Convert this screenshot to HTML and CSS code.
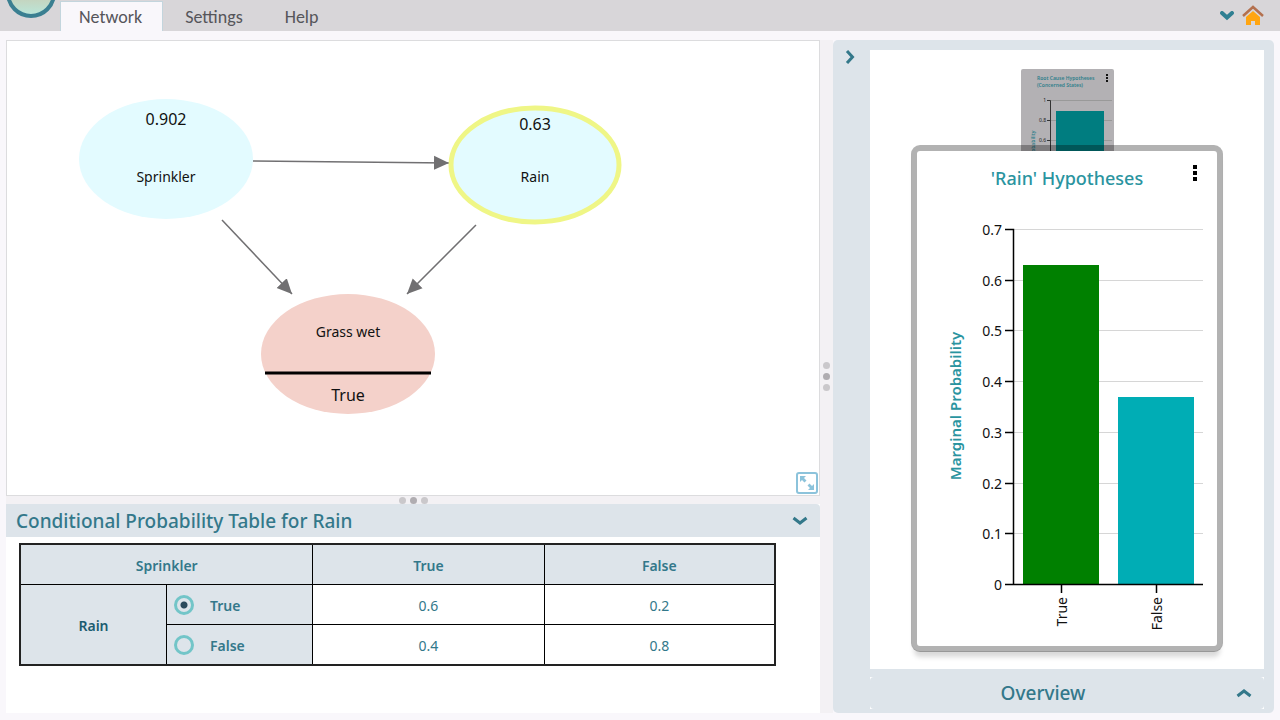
FILE: index.html
```html
<!DOCTYPE html>
<html lang="en">
<head>
    <meta charset="UTF-8">
    <meta name="viewport" content="width=device-width, initial-scale=1.0">
    <title>Network - Rain</title>
    <link rel="stylesheet" href="styles.css">
</head>
<body>
<header class="topbar">
    <svg class="logo" width="60" height="30" viewBox="0 0 60 30">
        <defs>
            <linearGradient id="logo-fill" x1="0" y1="0" x2="0" y2="1">
                <stop offset="0.5" stop-color="#c9cdb4"/>
                <stop offset="1" stop-color="#b9e8dc"/>
            </linearGradient>
        </defs>
        <circle cx="31" cy="-7" r="23" fill="url(#logo-fill)" stroke="#3a7f91" stroke-width="4"/>
    </svg>
    <nav class="tabs">
        <a class="tab active" href="#network">Network</a>
        <a class="tab" href="#settings">Settings</a>
        <a class="tab" href="#help">Help</a>
    </nav>
    <div class="topbar-actions">
        <button type="button" aria-label="More">
            <svg width="14" height="10" viewBox="0 0 14 10"><path d="M2 2 L7 6.5 L12 2" fill="none" stroke="#2f7f92" stroke-width="4" stroke-linecap="round"/></svg>
        </button>
        <button type="button" aria-label="Home">
            <svg width="22" height="22" viewBox="0 0 22 22">
                <path d="M4 12 L11 6 L18 12 V20 H13 V16 H9 V20 H4 Z" fill="#ffa511"/>
                <path d="M1 11 L11 2 L21 11" fill="none" stroke="#b4714f" stroke-width="2.5"/>
            </svg>
        </button>
    </div>
</header>

<main class="workspace">
    <div class="left">
        <section class="canvas" id="network">
            <svg class="graph" width="100%" height="100%">
                <defs>
                    <marker id="arrow" markerUnits="userSpaceOnUse" markerWidth="16" markerHeight="16" refX="15" refY="8" orient="auto">
                        <path d="M0 1 L15 8 L0 15 Z" fill="#717072"/>
                    </marker>
                </defs>
                <g class="edges">
                    <line x1="246" y1="120" x2="442" y2="122" marker-end="url(#arrow)"/>
                    <line x1="215" y1="179" x2="285" y2="253" marker-end="url(#arrow)"/>
                    <line x1="469" y1="184" x2="400" y2="253" marker-end="url(#arrow)"/>
                </g>
                <g class="node">
                    <ellipse cx="159" cy="118" rx="87" ry="60"/>
                    <text class="value" x="159" y="84">0.902</text>
                    <text x="159" y="141">Sprinkler</text>
                </g>
                <g class="node selected">
                    <ellipse cx="528" cy="124" rx="84" ry="57"/>
                    <text class="value" x="528" y="89">0.63</text>
                    <text x="528" y="141">Rain</text>
                </g>
                <g class="node evidence">
                    <ellipse cx="341" cy="313" rx="87" ry="60"/>
                    <line x1="258" y1="332" x2="424" y2="332"/>
                    <text x="341" y="296">Grass wet</text>
                    <text class="value" x="341" y="360">True</text>
                </g>
            </svg>
            <button type="button" class="expand" aria-label="Fit to window">
                <svg width="22" height="22" viewBox="0 0 22 22">
                    <rect x="1" y="1" width="20" height="20" rx="2" fill="#fff" stroke="#8cc3db" stroke-width="2"/>
                    <path d="M4 4 H10 L8 6 L10.5 8.5 L8.5 10.5 L6 8 L4 10 Z M18 18 H12 L14 16 L11.5 13.5 L13.5 11.5 L16 14 L18 12 Z" fill="#8cc3db"/>
                </svg>
            </button>
        </section>
        <div class="splitter horizontal"><i></i><i></i><i></i></div>
        <section class="cpt">
            <div class="cpt-header">
                <h2>Conditional Probability Table for Rain</h2>
                <button type="button" aria-label="Collapse table">
                    <svg width="16" height="10" viewBox="0 0 16 10"><path d="M1.5 2 L8 7 L14.5 2" fill="none" stroke="#33788a" stroke-width="3"/></svg>
                </button>
            </div>
            <table>
                <colgroup><col class="name"><col class="name"><col><col></colgroup>
                <tr>
                    <th colspan="2">Sprinkler</th>
                    <th>True</th>
                    <th>False</th>
                </tr>
                <tr>
                    <th class="variable" rowspan="2">Rain</th>
                    <th class="state"><input type="radio" name="rain" id="rain-true" checked><label for="rain-true">True</label></th>
                    <td>0.6</td>
                    <td>0.2</td>
                </tr>
                <tr>
                    <th class="state"><input type="radio" name="rain" id="rain-false"><label for="rain-false">False</label></th>
                    <td>0.4</td>
                    <td>0.8</td>
                </tr>
            </table>
        </section>
    </div>

    <div class="splitter vertical"><i></i><i></i><i></i></div>

    <aside class="side">
        <button type="button" class="side-toggle" aria-label="Hide panel">
            <svg width="10" height="14" viewBox="0 0 10 14"><path d="M2 1 L7.5 7 L2 13" fill="none" stroke="#33788a" stroke-width="3"/></svg>
        </button>
        <div class="side-body">
            <div class="stack">
                <svg class="thumb" width="93" height="82" viewBox="0 0 93 82">
                    <g class="thumb-title">
                        <text x="16" y="11">Root Cause Hypotheses</text>
                        <text x="16" y="18">(Concerned States)</text>
                    </g>
                    <path d="M85 5h2v2h-2z M85 8h2v2h-2z M85 11h2v2h-2z" fill="#111"/>
                    <path d="M29 31.5H91 M29 51.5H91 M29 71.5H91" stroke="#999"/>
                    <rect x="35" y="42" width="48" height="40" fill="#007d80"/>
                    <path d="M26 31.5H29.5V82 M26 51.5H29 M26 71.5H29" fill="none" stroke="#333"/>
                    <g class="thumb-ticks">
                        <text x="25" y="33">1</text>
                        <text x="25" y="53">0.8</text>
                        <text x="25" y="73">0.6</text>
                    </g>
                    <text class="thumb-axis" transform="translate(14 88) rotate(-90)">Probability</text>
                </svg>
                <section class="card">
                    <div class="card-header">
                        <h3>'Rain' Hypotheses</h3>
                        <button type="button" aria-label="Chart menu">
                            <svg width="4" height="16" viewBox="0 0 4 16"><path d="M0 0h4v4H0z M0 6h4v4H0z M0 12h4v4H0z"/></svg>
                        </button>
                    </div>
                    <svg class="chart" viewBox="0 0 300 443">
                        <path class="grid" d="M96 26.5H286 M96 77.5H286 M96 127.5H286 M96 178.5H286 M96 229.5H286 M96 280.5H286 M96 330.5H286"/>
                        <rect x="106" y="62" width="76" height="319" fill="#008000"/>
                        <rect x="201" y="194" width="76" height="187" fill="#00adb5"/>
                        <path class="axis" d="M88 26.5H96.5V381.5H286 M88 77.5H96 M88 127.5H96 M88 178.5H96 M88 229.5H96 M88 280.5H96 M88 330.5H96 M88 381.5H96 M144.5 381V390 M239.5 381V390"/>
                        <g class="ticks">
                            <text x="85" y="32">0.7</text>
                            <text x="85" y="83">0.6</text>
                            <text x="85" y="133">0.5</text>
                            <text x="85" y="184">0.4</text>
                            <text x="85" y="235">0.3</text>
                            <text x="85" y="286">0.2</text>
                            <text x="85" y="336">0.1</text>
                            <text x="85" y="387">0</text>
                            <text transform="translate(150 394) rotate(-90)">True</text>
                            <text transform="translate(245 394) rotate(-90)">False</text>
                        </g>
                        <text class="axis-title" transform="translate(44 203) rotate(-90)">Marginal Probability</text>
                    </svg>
                </section>
            </div>
            <div class="overview">
                <button type="button">
                    <span>Overview</span>
                    <svg width="16" height="10" viewBox="0 0 16 10"><path d="M1.5 8 L8 3 L14.5 8" fill="none" stroke="#33788a" stroke-width="3"/></svg>
                </button>
            </div>
        </div>
    </aside>
</main>
</body>
</html>
```
FILE: styles.css
```css
* {
    box-sizing: border-box;
}
body {
    margin: 0;
    min-height: 100vh;
    display: flex;
    flex-direction: column;
    background: #f9f7fb;
    color: #33788a;
    font-family: "Noto Sans", "Open Sans", sans-serif;
    font-size: 14px;
}
button {
    padding: 0;
    border: none;
    background: none;
    color: inherit;
    font: inherit;
    cursor: pointer;
}
svg {
    display: block;
}
h2, h3 {
    margin: 0;
    font-weight: 500;
}

/* top bar */
.topbar {
    display: flex;
    height: 31px;
    background: #d8d6d9;
}
.tabs {
    display: flex;
    flex: 1;
}
.tab {
    padding: 0 20px 0 18px;
    margin-top: 1px;
    color: #55555a;
    font-family: Carlito, Lato, sans-serif;
    font-size: 18px;
    line-height: 32px;
    text-decoration: none;
}
.tab + .tab {
    padding: 0 20px 0 22px;
}
.tab.active {
    line-height: 30px;
    background: #f9f7fb;
    border: 1px solid #c3d5dd;
    border-bottom: none;
}
.topbar-actions {
    display: flex;
    align-items: center;
    gap: 8px;
    padding-right: 16px;
}

/* layout */
.workspace {
    flex: 1;
    display: grid;
    grid-template-columns: 24fr 13px 13fr;
    padding: 9px 6px 7px;
}
.left {
    display: flex;
    flex-direction: column;
}
.splitter {
    display: flex;
    align-items: center;
    justify-content: center;
    gap: 4px;
    background: #f3f1f4;
}
.splitter i {
    width: 7px;
    height: 7px;
    border-radius: 50%;
    background: #cac8cb;
}
.splitter i:nth-child(2) {
    background: #b0adb1;
}
.splitter.horizontal {
    height: 8px;
}
.splitter.vertical {
    flex-direction: column;
}

/* network */
.canvas {
    position: relative;
    flex: 1;
    min-height: 456px;
    background: #fff;
    border: 1px solid #dcdcde;
}
.graph {
    position: absolute;
    inset: 0;
}
.edges line {
    stroke: #717072;
    stroke-width: 1.5;
}
.node ellipse {
    fill: #e3fbff;
}
.node text {
    fill: #111;
    font-size: 14px;
    text-anchor: middle;
}
.node .value {
    font-size: 16px;
}
.selected ellipse {
    stroke: #eff686;
    stroke-width: 5;
}
.evidence ellipse {
    fill: #f4d1ca;
}
.evidence line {
    stroke: #000;
    stroke-width: 3;
}
.expand {
    position: absolute;
    right: 1px;
    bottom: 1px;
}

/* probability table */
.cpt {
    min-height: 209px;
    background: #fff;
}
.cpt-header {
    display: flex;
    align-items: center;
    justify-content: space-between;
    height: 33px;
    padding: 0 12px 0 10px;
    border-radius: 0 4px 0 0;
    background: #dde4ea;
}
.cpt-header h2 {
    font-size: 19px;
}
.cpt table {
    width: 93%;
    height: 123px;
    margin: 6px 0 0 13px;
    table-layout: fixed;
    border-collapse: collapse;
    border: 2px solid #222;
    text-align: center;
}
.cpt col.name {
    width: 19.4%;
}
.cpt th, .cpt td {
    height: 40px;
    padding: 2px 0 0;
    border: 1px solid #000;
}
.cpt th {
    background: #dde4ea;
    font-weight: 600;
}
.cpt .variable {
    color: #1b5c70;
}
.cpt .state {
    padding: 0 0 0 7px;
    text-align: left;
}
.state input {
    appearance: none;
    width: 20px;
    height: 20px;
    margin: 0 16px 0 0;
    border: 3px solid #72c5c8;
    border-radius: 50%;
    vertical-align: middle;
}
.state input:checked {
    background: radial-gradient(circle, #2b4a5c 3px, transparent 4px);
}
.state label {
    vertical-align: middle;
}

/* side panel */
.side {
    display: flex;
    align-items: stretch;
    padding: 10px 10px 4px 0;
    border-radius: 5px;
    background: #dde4ea;
}
.side-toggle {
    display: flex;
    justify-content: center;
    width: 37px;
    height: 14px;
    padding-right: 4px;
}
.side-body {
    flex: 1;
    display: flex;
    flex-direction: column;
}
.stack {
    flex: 1;
    display: flex;
    flex-direction: column;
    align-items: center;
    padding: 19px 0 17px;
    background: #fff;
}
.thumb {
    border-radius: 2px 2px 0 0;
    background: #b3b1b4;
    font-size: 5px;
}
.thumb-title, .thumb-axis {
    fill: #2f7f8b;
    font-weight: 600;
}
.thumb-ticks {
    fill: #222;
    text-anchor: end;
}

.card {
    width: 312px;
    margin-top: -6px;
    border: 6px solid rgba(0, 0, 0, 0.3);
    border-radius: 9px;
    background: #fff;
    background-clip: padding-box;
    box-shadow: 0 8px 5px -3px rgba(0, 0, 0, 0.15);
}
.card-header {
    display: grid;
    grid-template-columns: 1fr auto 1fr;
    height: 52px;
    padding: 14px 20px 0;
}
.card-header h3 {
    grid-column: 2;
    color: #2a949f;
    font-size: 18px;
    line-height: 26px;
    white-space: nowrap;
}
.card-header button {
    justify-self: end;
    height: 16px;
}
.chart {
    width: 100%;
}
.chart .grid {
    stroke: #d6d6d6;
}
.chart .axis {
    fill: none;
    stroke: #000;
    stroke-width: 1.5;
}
.ticks text {
    fill: #111;
    font-size: 14px;
    text-anchor: end;
}
.axis-title {
    fill: #2a949f;
    font-size: 15px;
    font-weight: 600;
    text-anchor: middle;
}

.overview {
    margin-top: 8px;
    background: #fff;
}
.overview button {
    display: flex;
    align-items: center;
    width: 100%;
    height: 32px;
    padding-right: 12px;
    border-radius: 4px;
    background: #dde4ea;
    font-size: 19px;
    font-weight: 500;
}
.overview span {
    flex: 1;
    padding-right: 20px;
}
```
